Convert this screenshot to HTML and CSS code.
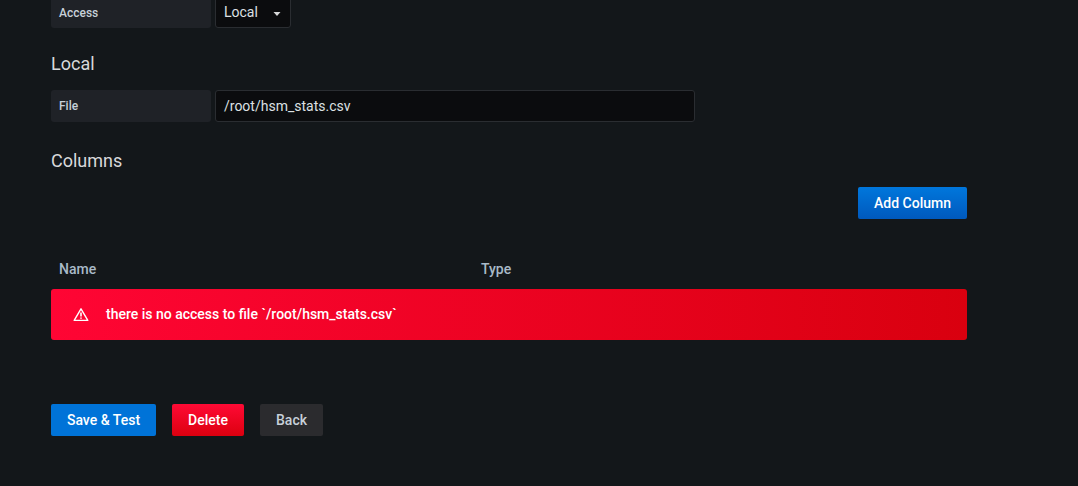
FILE: index.html
```html
<!DOCTYPE html>
<html lang="en">
<head>
<meta charset="utf-8">
<title>Data source settings</title>
<link rel="stylesheet" href="styles.css">
</head>
<body>
<main class="page">
  <div class="form-row">
    <label class="form-label form-label-access">Access</label>
    <div class="select"><span>Local</span><svg class="caret" width="8" height="4" viewBox="0 0 8 4"><path d="M0.5 0H7.5L4 4Z" fill="#d8d9da"/></svg></div>
  </div>
  <h3 class="section-title local-title">Local</h3>
  <div class="form-row">
    <label class="form-label">File</label>
    <div class="input">/root/hsm_stats.csv</div>
  </div>
  <h3 class="section-title columns-title">Columns</h3>
  <div class="add-row"><button class="btn btn-add">Add Column</button></div>
  <div class="table-head"><span class="col-name">Name</span><span>Type</span></div>
  <div class="alert">
    <svg class="alert-icon" width="16" height="16" viewBox="0 0 16 16" fill="none" stroke="#fff" stroke-width="1.4" stroke-linejoin="round"><path d="M8 1.8 14.8 13.4H1.2Z"/><path d="M8 5.6V9.4" stroke-width="1.6"/><path d="M8 10.5V11.8" stroke-width="1.6"/></svg>
    <span class="alert-text">there is no access to file `/root/hsm_stats.csv`</span>
  </div>
  <div class="actions">
    <button class="btn btn-save">Save &amp; Test</button>
    <button class="btn btn-danger">Delete</button>
    <button class="btn btn-back">Back</button>
  </div>
</main>
</body>
</html>
```
FILE: styles.css
```css
html, body {
  margin: 0;
  height: 100%;
  background: #13171a;
  overflow: hidden;
}
.page {
  width: 916px;
  margin: -4px 0 0 51px;
  font-family: Roboto, "Liberation Sans", sans-serif;
  font-size: 14px;
  color: #c7d0d9;
}
.form-row {
  display: flex;
  gap: 4px;
  height: 32px;
}
.form-label {
  width: 160px;
  box-sizing: border-box;
  padding-left: 8px;
  background: #1f2227;
  border-radius: 3px;
  font-size: 12px;
  font-weight: 500;
  line-height: 32px;
  color: #c7d0d9;
}
.form-label-access { padding-top: 1px; }
.select, .input {
  box-sizing: border-box;
  background: #0b0c0e;
  border: 1px solid #2a2d31;
  border-radius: 3px;
  padding-left: 8px;
  line-height: 30px;
  color: #dde0e3;
}
.select {
  width: 76px;
  display: flex;
  align-items: center;
}
.caret { margin-left: 15px; margin-top: 3px; }
.input { width: 480px; }
.section-title {
  margin: 0;
  font-size: 18px;
  font-weight: 400;
  line-height: 22px;
  color: #d8d9da;
}
.local-title { margin-top: 25px; margin-bottom: 15px; }
.columns-title { margin-top: 28px; }
.add-row {
  display: flex;
  justify-content: flex-end;
  margin-top: 15px;
}
.btn {
  height: 32px;
  padding: 0;
  border: 0;
  border-radius: 2px;
  font-family: inherit;
  font-size: 14px;
  font-weight: 500;
  color: #fff;
}
.btn-add { background: linear-gradient(180deg, #0077dc, #0059bd); width: 109px; }
.table-head {
  display: flex;
  margin-top: 41px;
  padding-left: 8px;
  font-size: 14px;
  line-height: 18px;
  font-weight: 500;
  color: #a9bac8;
}
.col-name { width: 422px; }
.alert {
  display: flex;
  align-items: center;
  height: 51px;
  margin-top: 11px;
  padding-left: 22px;
  box-sizing: border-box;
  border-radius: 3px;
  background: linear-gradient(90deg, #ff0534, #d9000f);
  color: #fff;
  font-size: 14px;
  font-weight: 500;
}
.alert-icon { margin-right: 17px; }
.alert-text { margin-top: -2px; }
.actions {
  display: flex;
  gap: 16px;
  margin-top: 64px;
}
.btn-save { background: #0073d8; width: 105px; }
.btn-danger { background: linear-gradient(180deg, #ff0a35, #dc000f); width: 72px; }
.btn-back { background: #2b2b2e; color: #c7d0d9; width: 63px; }
```
